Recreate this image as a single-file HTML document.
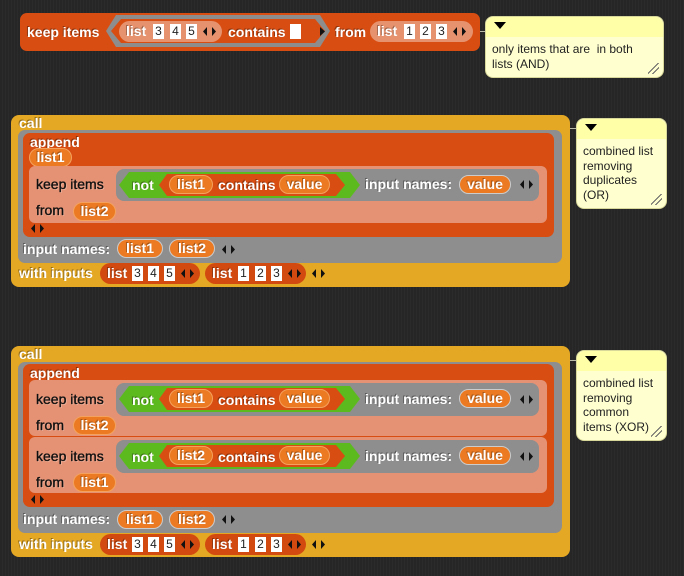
<!DOCTYPE html>
<html><head><meta charset="utf-8"><style>
*{margin:0;padding:0;box-sizing:border-box}
body{width:684px;height:576px;overflow:hidden;position:relative;font-family:"Liberation Sans",Arial,sans-serif;
background:#272727 repeating-linear-gradient(90deg,#262626 0 2px,#2b2b2b 2px 3px);}
.a{position:absolute}
.t{position:absolute;font-weight:bold;font-size:14px;color:#fff;white-space:nowrap;line-height:16px;text-shadow:-1px -1px 0 rgba(0,0,0,.35)}
.d{color:#111;text-shadow:1px 1px 0 rgba(255,255,255,.25);font-weight:normal;-webkit-text-stroke:.35px #111}
.r{border-radius:8px}
.pill{position:absolute;height:19px;border-radius:10px;background:#ec7a22;border:1px solid #f4a25e;color:#fff;font-weight:bold;font-size:14px;line-height:16px;text-align:center;white-space:nowrap;text-shadow:-1px -1px 0 rgba(0,0,0,.3)}
.lp{position:absolute;height:21px;border-radius:11px;color:#fff;font-weight:bold;font-size:14px;white-space:nowrap;text-shadow:-1px -1px 0 rgba(0,0,0,.3)}
.lp span{position:absolute;top:2px;left:7px}
.lp i{position:absolute;top:3px;width:11px;height:15px;background:#fff;color:#222;font-style:normal;font-weight:normal;font-size:12px;line-height:15px;text-align:center;text-shadow:none}
.lp svg{position:absolute;top:6px}
.ar{position:absolute}
.cm{position:absolute;background:#ffffcf;border-radius:8px;border:1px solid #d8d89a;font-size:12px;color:#222;line-height:14.5px}
.cm .h{height:20px;background:#ffffa8;border-radius:8px 8px 0 0;padding:5px 8px}
.cm .h s{display:block;width:0;height:0;border-left:6px solid transparent;border-right:6px solid transparent;border-top:7px solid #000}
.cm .x{padding:5px 6px}
.cm .g{position:absolute;right:4px;bottom:3px;width:11px;height:11px;background:linear-gradient(135deg,transparent 45%,#666 45% 52%,transparent 52% 68%,#666 68% 75%,transparent 75%)}
.hex{position:absolute;clip-path:polygon(10px 0,calc(100% - 10px) 0,100% 50%,calc(100% - 10px) 100%,10px 100%,0 50%)}
.hs{clip-path:polygon(8px 0,calc(100% - 9px) 0,100% 50%,calc(100% - 9px) 100%,8px 100%,0 50%)}
</style></head><body>
<svg width="0" height="0" style="position:absolute"><defs>
<symbol id="lr" viewBox="0 0 13 9"><path d="M4 0L0 4.5L4 9Z M9 0L13 4.5L9 9Z" fill="#111"/></symbol>
</defs></svg>

<!-- Block 1 -->
<div class="a" style="left:20px;top:13px;width:460px;height:38px;background:#d84d12;border-radius:7px"></div>
<div class="t" style="left:27px;top:24px">keep items</div>
<div class="hex" style="left:106px;top:15px;width:224px;height:32px;background:#8d8d8d"></div>
<div class="hex" style="left:111px;top:19px;width:214px;height:24px;background:#d84d12"></div>
<div class="lp" style="left:119px;top:21px;width:103px;background:#e7926e"><span>list</span><i style="left:34px">3</i><i style="left:51px">4</i><i style="left:67px">5</i><svg style="left:84px" width="13" height="9"><use href="#lr"/></svg></div>
<div class="t" style="left:228px;top:24px">contains</div>
<div class="a" style="left:290px;top:24px;width:11px;height:15px;background:#fff"></div>
<svg class="ar" style="left:320px;top:27px" width="5" height="9"><path d="M0 0L5 4.5L0 9Z" fill="#111"/></svg>
<div class="t" style="left:335px;top:24px">from</div>
<div class="lp" style="left:370px;top:21px;width:103px;background:#e7926e"><span>list</span><i style="left:34px">1</i><i style="left:50px">2</i><i style="left:66px">3</i><svg style="left:83px" width="13" height="9"><use href="#lr"/></svg></div>
<div class="a" style="left:480px;top:31px;width:6px;height:1px;background:#bba"></div>
<div class="cm" style="left:485px;top:16px;width:179px;height:62px"><div class="h"><s></s></div><div class="x">only items that are &nbsp;in both<br>lists (AND)</div><div class="g"></div></div>

<!-- Block 2 -->
<div class="a" style="left:11px;top:115px;width:559px;height:172px;background:#e4a824;border-radius:8px"></div>
<div class="t" style="left:19px;top:115px">call</div>
<div class="a" style="left:18px;top:130px;width:544px;height:133px;background:#8e8e8e;border-radius:7px"></div>
<div class="a" style="left:23px;top:133px;width:531px;height:104px;background:#d84d12;border-radius:7px"></div>
<div class="t" style="left:30px;top:134px">append</div>
<div class="pill" style="left:29px;top:148px;width:43px">list1</div>
<div class="a" style="left:29px;top:166px;width:518px;height:57px;background:#e59274;border-radius:6px"></div>
<div class="t d" style="left:36px;top:176px">keep items</div>
<div class="a" style="left:116px;top:169px;width:423px;height:32px;background:#8e8e8e;border-radius:8px"></div>
<div class="hex" style="left:119px;top:172px;width:241px;height:26px;background:#5cba1f"></div>
<div class="t" style="left:132px;top:177px">not</div>
<div class="hex hs" style="left:159px;top:174px;width:186px;height:22px;background:#d84d12"></div>
<div class="pill" style="left:169px;top:175px;width:44px">list1</div>
<div class="t" style="left:218px;top:177px">contains</div>
<div class="pill" style="left:279px;top:175px;width:51px">value</div>
<div class="t" style="left:365px;top:176px">input names:</div>
<div class="pill" style="left:459px;top:175px;width:52px;border-color:#ccc">value</div>
<svg class="ar" style="left:520px;top:180px" width="13" height="9"><use href="#lr"/></svg>
<div class="t d" style="left:36px;top:202px">from</div>
<div class="pill" style="left:73px;top:202px;width:43px">list2</div>
<svg class="ar" style="left:31px;top:224px" width="13" height="9"><use href="#lr"/></svg>
<div class="t" style="left:23px;top:241px">input names:</div>
<div class="pill" style="left:117px;top:239px;width:46px;border-color:#ccc">list1</div>
<div class="pill" style="left:169px;top:239px;width:46px;border-color:#ccc">list2</div>
<svg class="ar" style="left:222px;top:245px" width="13" height="9"><use href="#lr"/></svg>
<div class="t" style="left:19px;top:265px">with inputs</div>
<div class="lp" style="left:100px;top:263px;width:100px;background:#d24a10"><span>list</span><i style="left:32px">3</i><i style="left:48px">4</i><i style="left:64px">5</i><svg style="left:81px" width="13" height="9"><use href="#lr"/></svg></div>
<div class="lp" style="left:205px;top:263px;width:101px;background:#d24a10"><span>list</span><i style="left:33px">1</i><i style="left:50px">2</i><i style="left:66px">3</i><svg style="left:83px" width="13" height="9"><use href="#lr"/></svg></div>
<svg class="ar" style="left:312px;top:269px" width="13" height="9"><use href="#lr"/></svg>
<div class="a" style="left:570px;top:128px;width:6px;height:1px;background:#bba"></div>
<div class="cm" style="left:576px;top:118px;width:91px;height:91px"><div class="h"><s></s></div><div class="x">combined list removing duplicates (OR)</div><div class="g"></div></div>

<!-- Block 3 -->
<div class="a" style="left:11px;top:346px;width:559px;height:211px;background:#e4a824;border-radius:8px"></div>
<div class="t" style="left:19px;top:346px">call</div>
<div class="a" style="left:18px;top:362px;width:544px;height:171px;background:#8e8e8e;border-radius:7px"></div>
<div class="a" style="left:23px;top:364px;width:531px;height:143px;background:#d84d12;border-radius:7px"></div>
<div class="t" style="left:30px;top:365px">append</div>

<div class="a" style="left:29px;top:380px;width:518px;height:56px;background:#e59274;border-radius:6px"></div>
<div class="t d" style="left:36px;top:391px">keep items</div>
<div class="a" style="left:116px;top:383px;width:423px;height:33px;background:#8e8e8e;border-radius:8px"></div>
<div class="hex" style="left:119px;top:386px;width:241px;height:26px;background:#5cba1f"></div>
<div class="t" style="left:132px;top:392px">not</div>
<div class="hex hs" style="left:159px;top:388px;width:186px;height:22px;background:#d84d12"></div>
<div class="pill" style="left:169px;top:389px;width:44px">list1</div>
<div class="t" style="left:218px;top:392px">contains</div>
<div class="pill" style="left:279px;top:389px;width:51px">value</div>
<div class="t" style="left:365px;top:391px">input names:</div>
<div class="pill" style="left:459px;top:389px;width:52px;border-color:#ccc">value</div>
<svg class="ar" style="left:520px;top:395px" width="13" height="9"><use href="#lr"/></svg>
<div class="t d" style="left:36px;top:417px">from</div>
<div class="pill" style="left:73px;top:416px;width:43px">list2</div>

<div class="a" style="left:29px;top:437px;width:518px;height:56px;background:#e59274;border-radius:6px"></div>
<div class="t d" style="left:36px;top:448px">keep items</div>
<div class="a" style="left:116px;top:440px;width:423px;height:33px;background:#8e8e8e;border-radius:8px"></div>
<div class="hex" style="left:119px;top:443px;width:241px;height:26px;background:#5cba1f"></div>
<div class="t" style="left:132px;top:449px">not</div>
<div class="hex hs" style="left:159px;top:445px;width:186px;height:22px;background:#d84d12"></div>
<div class="pill" style="left:169px;top:446px;width:44px">list2</div>
<div class="t" style="left:218px;top:449px">contains</div>
<div class="pill" style="left:279px;top:446px;width:51px">value</div>
<div class="t" style="left:365px;top:448px">input names:</div>
<div class="pill" style="left:459px;top:446px;width:52px;border-color:#ccc">value</div>
<svg class="ar" style="left:520px;top:452px" width="13" height="9"><use href="#lr"/></svg>
<div class="t d" style="left:36px;top:474px">from</div>
<div class="pill" style="left:73px;top:473px;width:43px">list1</div>

<svg class="ar" style="left:31px;top:495px" width="13" height="9"><use href="#lr"/></svg>
<div class="t" style="left:23px;top:511px">input names:</div>
<div class="pill" style="left:117px;top:510px;width:46px;border-color:#ccc">list1</div>
<div class="pill" style="left:169px;top:510px;width:46px;border-color:#ccc">list2</div>
<svg class="ar" style="left:222px;top:515px" width="13" height="9"><use href="#lr"/></svg>
<div class="t" style="left:19px;top:536px">with inputs</div>
<div class="lp" style="left:100px;top:534px;width:100px;background:#d24a10"><span>list</span><i style="left:32px">3</i><i style="left:48px">4</i><i style="left:64px">5</i><svg style="left:81px" width="13" height="9"><use href="#lr"/></svg></div>
<div class="lp" style="left:205px;top:534px;width:101px;background:#d24a10"><span>list</span><i style="left:33px">1</i><i style="left:50px">2</i><i style="left:66px">3</i><svg style="left:83px" width="13" height="9"><use href="#lr"/></svg></div>
<svg class="ar" style="left:312px;top:540px" width="13" height="9"><use href="#lr"/></svg>
<div class="a" style="left:570px;top:360px;width:6px;height:1px;background:#bba"></div>
<div class="cm" style="left:576px;top:350px;width:91px;height:91px"><div class="h"><s></s></div><div class="x">combined list removing common items (XOR)</div><div class="g"></div></div>

</body></html>
